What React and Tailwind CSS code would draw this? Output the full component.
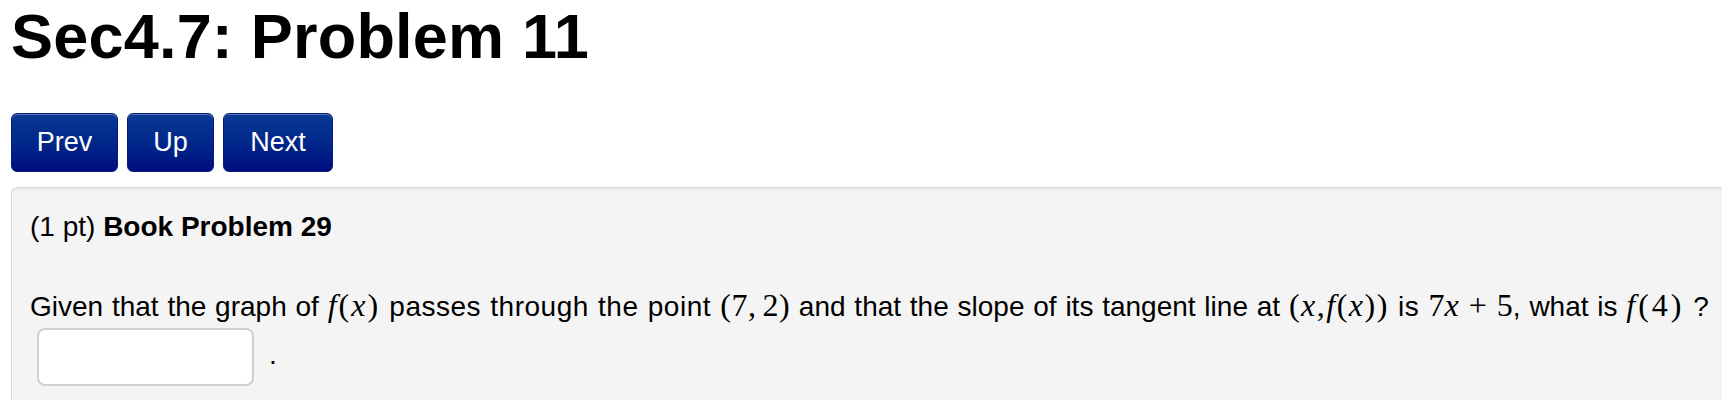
import React from 'react';

function M({ children, className = '' }) {
  return (
    <span className={`font-['Liberation_Serif','Times_New_Roman',serif] text-[32px] leading-none ${className}`}>
      {children}
    </span>
  );
}

function NavButton({ label, width }) {
  return (
    <button
      className={`${width} h-[59px] rounded-[6px] border border-[#06207a] bg-gradient-to-b from-[#0b3a93] to-[#000c80] text-white text-[27px] leading-none shadow-[inset_0_1px_0_rgba(255,255,255,0.3)] flex items-center justify-center`}
    >
      {label}
    </button>
  );
}

export default function App() {
  return (
    <div className="min-h-[400px] bg-white pl-[11px] font-['Liberation_Sans','Arial',sans-serif] text-black overflow-hidden">
      <h1 className="text-[63px] font-bold leading-[73px] tracking-[0.2px]">Sec4.7: Problem 11</h1>

      <div className="mt-[40px] flex gap-[9px]">
        <NavButton label="Prev" width="w-[107px]" />
        <NavButton label="Up" width="w-[87px]" />
        <NavButton label="Next" width="w-[110px]" />
      </div>

      <div className="mt-[15px] h-[213px] border-t border-l border-[#dadada] rounded-tl-[6px] bg-[#f4f4f4] pl-[18px] pt-[23px] shadow-[inset_0_3px_3px_-2px_rgba(0,0,0,0.06)]">
        <div className="text-[28px] leading-[32px]">
          (1 pt) <b>Book Problem 29</b>
        </div>

        <p className="mt-[44px] text-[28px] leading-[40px] whitespace-nowrap [word-spacing:1px]">
          Given that the graph of{' '}
          <M className="tracking-[2px]"><i>f</i>(<i>x</i>)</M>
          <span className="tracking-[0.5px]"> passes through the point </span>
          <M className="tracking-[0.5px]">(7,<span className="ml-[6px]">2</span>)</M>
          {' '}and that the slope of its tangent line at{' '}
          <M className="tracking-[1.5px]">(<i>x</i>,<i>f</i>(<i>x</i>))</M>
          <span className="tracking-[0.5px]"> is </span>
          <M>7<i>x</i><span className="mx-[10px]">+</span>5</M>, what is{' '}
          <M className="tracking-[3px]"><i>f</i>(4)</M> ?
        </p>

        <div className="mt-[1px] flex items-center">
          <input
            type="text"
            className="ml-[7px] w-[217px] h-[58px] rounded-[8px] border-2 border-[#cfcfcf] bg-white outline-none"
          />
          <span className="ml-[15px] text-[28px] leading-[28px] -mt-[5px]">.</span>
        </div>
      </div>
    </div>
  );
}
